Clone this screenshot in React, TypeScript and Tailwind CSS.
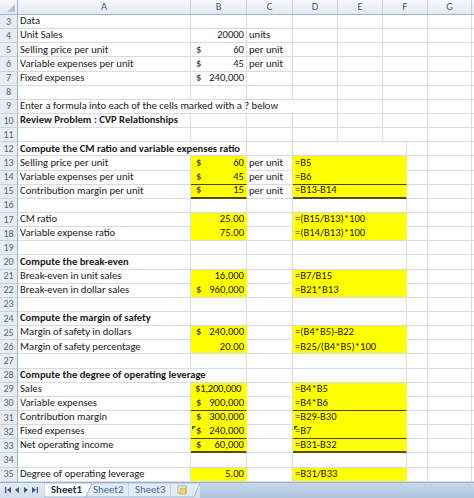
import React from "react";

type Line = "thin" | "thick" | undefined;

type Row = {
  n: number;
  a?: string;
  bold?: boolean;
  span?: "ab" | "abcd";
  cur?: boolean;
  b?: string;
  c?: string;
  d?: string;
  hl?: boolean;
  line?: Line;
  flag?: boolean;
};

const rows: Row[] = [
  { n: 3, a: "Data" },
  { n: 4, a: "Unit Sales", b: "20000", c: "units" },
  { n: 5, a: "Selling price per unit", cur: true, b: "60", c: "per unit" },
  { n: 6, a: "Variable expenses per unit", cur: true, b: "45", c: "per unit" },
  { n: 7, a: "Fixed expenses", cur: true, b: "240,000" },
  { n: 8 },
  { n: 9, a: "Enter a formula into each of the cells marked with a ? below", span: "abcd" },
  { n: 10, a: "Review Problem : CVP Relationships", bold: true },
  { n: 11 },
  { n: 12, a: "Compute the CM ratio and variable expenses ratio", bold: true, span: "ab" },
  { n: 13, a: "Selling price per unit", cur: true, b: "60", c: "per unit", d: "=B5", hl: true },
  { n: 14, a: "Variable expenses per unit", cur: true, b: "45", c: "per unit", d: "=B6", hl: true, line: "thin" },
  { n: 15, a: "Contribution margin per unit", cur: true, b: "15", c: "per unit", d: "=B13-B14", hl: true, line: "thick" },
  { n: 16 },
  { n: 17, a: "CM ratio", b: "25.00", d: "=(B15/B13)*100", hl: true },
  { n: 18, a: "Variable expense ratio", b: "75.00", d: "=(B14/B13)*100", hl: true },
  { n: 19 },
  { n: 20, a: "Compute the break-even", bold: true },
  { n: 21, a: "Break-even in unit sales", b: "16,000", d: "=B7/B15", hl: true },
  { n: 22, a: "Break-even in dollar sales", cur: true, b: "960,000", d: "=B21*B13", hl: true },
  { n: 23 },
  { n: 24, a: "Compute the margin of safety", bold: true },
  { n: 25, a: "Margin of safety in dollars", cur: true, b: "240,000", d: "=(B4*B5)-B22", hl: true },
  { n: 26, a: "Margin of safety percentage", b: "20.00", d: "=B25/(B4*B5)*100", hl: true },
  { n: 27 },
  { n: 28, a: "Compute the degree of operating leverage", bold: true, span: "ab" },
  { n: 29, a: "Sales", b: "$1,200,000", d: "=B4*B5", hl: true },
  { n: 30, a: "Variable expenses", cur: true, b: "900,000", d: "=B4*B6", hl: true, line: "thin" },
  { n: 31, a: "Contribution margin", cur: true, b: "300,000", d: "=B29-B30", hl: true },
  { n: 32, a: "Fixed expenses", cur: true, b: "240,000", d: "=B7", hl: true, line: "thin", flag: true },
  { n: 33, a: "Net operating income", cur: true, b: "60,000", d: "=B31-B32", hl: true, line: "thick" },
  { n: 34 },
  { n: 35, a: "Degree of operating leverage", b: "5.00", d: "=B31/B33", hl: true },
];

const grid = "border-r border-b border-[#d5dce7]";

function yellowCls(r: Row, next?: Row) {
  if (r.line === "thick") return "bg-[#ffff00] border-r border-r-transparent border-b-2 border-b-[#4d4b22]";
  if (r.line === "thin") return "bg-[#ffff00] border-r border-r-transparent border-b border-b-[#45442c]";
  if (next && next.hl) return "bg-[#ffff00] border-r border-r-transparent border-b border-b-transparent";
  return "bg-[#ffff00] border-r border-r-transparent border-b border-b-[#d5dce7]";
}

function Flag() {
  return (
    <svg className="absolute left-[1px] top-[1px]" width="4" height="4" viewBox="0 0 4 4">
      <polygon points="0,0 4,0 0,4" fill="#1f7a1f" />
    </svg>
  );
}

function SheetRow({ r, next }: { r: Row; next?: Row }) {
  const lower = r.n >= 12;
  const bCls = r.hl ? yellowCls(r, next) : grid;
  const aWidth = r.span === "abcd" ? "w-[320px]" : r.span === "ab" ? "w-[229px]" : "w-[173px]";

  return (
    <div className="flex h-[14.15px]">
      <div className="w-[18px] shrink-0 flex items-center justify-center bg-[#e8edf5] border-r border-b border-r-[#9fb3cb] border-b-[#c8d3e1] text-[10px] text-[#56657a]">
        {r.n}
      </div>
      <div
        className={`${aWidth} shrink-0 ${grid} pl-[2px] flex items-center whitespace-nowrap overflow-hidden ${
          r.bold ? "font-bold" : ""
        }`}
      >
        {r.a}
      </div>
      {!r.span && (
        <div className={`relative w-[56px] shrink-0 ${bCls} flex items-center whitespace-nowrap pl-[5px] pr-[2px]`}>
          {r.flag && <Flag />}
          {r.cur && <span>$</span>}
          <span className={r.b && r.b.startsWith("$") ? "-ml-[1px] tracking-[-0.2px]" : "ml-auto"}>{r.b}</span>
        </div>
      )}
      {r.span !== "abcd" && (
        <div className={`w-[46px] shrink-0 ${grid} pl-[2px] flex items-center whitespace-nowrap`}>{r.c}</div>
      )}
      {lower ? (
        <>
          <div
            className={`relative w-[114px] shrink-0 ${r.hl ? yellowCls(r, next) : grid} pl-[2px] flex items-center whitespace-nowrap`}
          >
            {r.flag && <Flag />}
            {r.d}
          </div>
          <div className={`w-[21px] shrink-0 ${grid}`} />
        </>
      ) : (
        <>
          {r.span !== "abcd" && <div className={`w-[45px] shrink-0 ${grid}`} />}
          <div className={`w-[45px] shrink-0 ${grid}`} />
          <div className={`w-[45px] shrink-0 ${grid}`} />
        </>
      )}
      <div className={`w-[44px] shrink-0 ${grid}`} />
      <div className="flex-1 border-b border-[#d5dce7]" />
    </div>
  );
}

function HeaderRow() {
  const cols: [string, string][] = [
    ["A", "w-[173px]"],
    ["B", "w-[56px]"],
    ["C", "w-[46px]"],
    ["D", "w-[45px]"],
    ["E", "w-[45px]"],
    ["F", "w-[45px]"],
    ["G", "w-[44px]"],
  ];
  return (
    <div className="flex h-[15px] bg-linear-to-b from-[#f7f9fc] to-[#e2e8f0] border-b border-[#9fb3cb]">
      <div className="relative w-[18px] shrink-0 border-r border-[#9fb3cb]">
        <svg className="absolute right-[2px] bottom-[2px]" width="8" height="8" viewBox="0 0 8 8">
          <polygon points="8,0 8,8 0,8" fill="#b7c4d5" />
        </svg>
      </div>
      {cols.map(([l, w]) => (
        <div
          key={l}
          className={`${w} shrink-0 border-r border-[#c5d2e2] flex items-center justify-center text-[10.5px] text-[#4a596c]`}
        >
          {l}
        </div>
      ))}
      <div className="flex-1" />
    </div>
  );
}

function NavIcon({ kind }: { kind: "first" | "prev" | "next" | "last" }) {
  return (
    <svg width="8" height="8" viewBox="0 0 8 8">
      {kind === "first" && (
        <>
          <rect x="1" y="1" width="1.3" height="6" fill="#425a7c" />
          <polygon points="7,1 7,7 3,4" fill="#425a7c" />
        </>
      )}
      {kind === "prev" && <polygon points="6,1 6,7 2,4" fill="#425a7c" />}
      {kind === "next" && <polygon points="2,1 2,7 6,4" fill="#425a7c" />}
      {kind === "last" && (
        <>
          <polygon points="1,1 1,7 5,4" fill="#425a7c" />
          <rect x="5.7" y="1" width="1.3" height="6" fill="#425a7c" />
        </>
      )}
    </svg>
  );
}

function Tab({ label, active }: { label: string; active?: boolean }) {
  return (
    <div className={`relative h-full w-[42px] flex items-center ${active ? "z-10" : ""}`}>
      <svg className="absolute top-0 left-0" width="48" height="16" viewBox="0 0 48 16">
        <polygon
          points="0,0 48,0 42,14 0,14"
          fill={active ? "#ffffff" : "#e3ebf6"}
          stroke={active ? "#8aa2c2" : "#9cb3d0"}
          strokeWidth="0.8"
        />
      </svg>
      <span
        className={`relative pl-[7px] text-[10.8px] ${
          active ? "font-bold text-[#1e3150]" : "text-[#4470a8]"
        }`}
      >
        {label}
      </span>
    </div>
  );
}

function SheetTabs() {
  return (
    <div className="flex h-[16px] border-t border-[#9fb3cb]">
      <div className="w-[200px] shrink-0 flex items-center bg-linear-to-b from-[#e3ebf6] to-[#d2deee]">
        <div className="flex items-center gap-[1px] pl-[4px] w-[44px]">
          <NavIcon kind="first" />
          <NavIcon kind="prev" />
          <NavIcon kind="next" />
          <NavIcon kind="last" />
        </div>
        <div className="flex h-full">
          <Tab label="Sheet1" active />
          <Tab label="Sheet2" />
          <Tab label="Sheet3" />
          <div className="relative w-[30px] h-full">
            <svg className="absolute inset-0" width="30" height="16" viewBox="0 0 30 16">
              <polygon points="0,0 30,0 24,14 0,14" fill="#e3ebf6" stroke="#9cb3d0" strokeWidth="0.8" />
              <rect x="8" y="3" width="8" height="7" fill="#ffffff" stroke="#8a9bb2" strokeWidth="0.8" />
              <rect x="10" y="5" width="6" height="6" fill="#f2d36b" stroke="#b89530" strokeWidth="0.6" />
            </svg>
          </div>
        </div>
      </div>
      <div className="flex-1 bg-linear-to-b from-[#c7d6ea] to-[#aec3de]" />
    </div>
  );
}

export default function App() {
  return (
    <div
      className="w-[474px] h-[498px] overflow-hidden bg-white text-[#1a1a1a] text-[10.6px] leading-none"
      style={{ fontFamily: "Carlito, 'Liberation Sans Narrow', 'Liberation Sans', sans-serif" }}
    >
      <HeaderRow />
      {rows.map((r, i) => (
        <SheetRow key={r.n} r={r} next={rows[i + 1]} />
      ))}
      <SheetTabs />
    </div>
  );
}
